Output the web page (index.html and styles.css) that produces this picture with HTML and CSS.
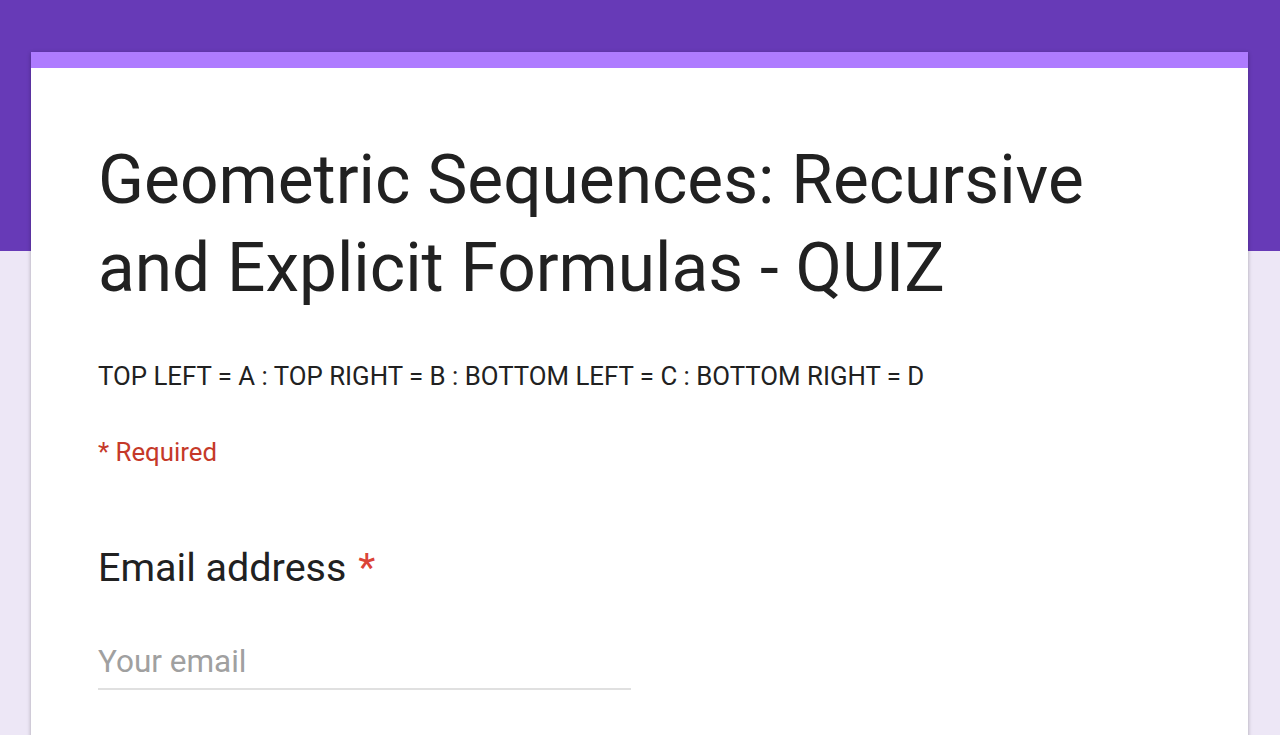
FILE: index.html
```html
<!DOCTYPE html>
<html lang="en">
<head>
    <meta charset="UTF-8">
    <meta name="viewport" content="width=device-width, initial-scale=1.0">
    <title>Geometric Sequences: Recursive and Explicit Formulas - QUIZ</title>
    <link rel="stylesheet" href="styles.css">
</head>
<body>
    <div class="header-band"></div>

    <main class="form-container">
        <div class="form-card">
            <div class="form-accent"></div>
            <div class="form-body">
                <h1 class="form-title">Geometric Sequences: Recursive and Explicit Formulas - QUIZ</h1>
                <p class="form-description">TOP LEFT = A : TOP RIGHT = B : BOTTOM LEFT = C : BOTTOM RIGHT = D</p>
                <p class="required-note">* Required</p>

                <div class="question">
                    <label class="question-title" for="email">Email address <span class="asterisk">*</span></label>
                    <input type="email" id="email" class="text-input" placeholder="Your email">
                </div>
            </div>
        </div>
    </main>
</body>
</html>
```

FILE: styles.css
```css
body {
    font-family: 'Roboto', 'Liberation Sans', sans-serif;
    margin: 0;
    padding: 0;
    background-color: #ede7f6;
    color: #212121;
}

.header-band {
    height: 251px;
    background-color: #673ab7;
}

.form-container {
    margin-top: -199px;
    padding: 0 32px 0 31px;
}

.form-card {
    background: #fff;
    box-shadow: 0 1px 4px rgba(0, 0, 0, 0.3);
    min-height: 800px;
}

.form-accent {
    height: 16px;
    background-color: #ae7bff;
}

.form-body {
    padding: 68px 67px 0;
}

.form-title {
    margin: 0;
    font-size: 67.6px;
    line-height: 88px;
    font-weight: 400;
    color: #212121;
    max-width: 1050px;
}

.form-description {
    margin: 49px 0 0;
    font-size: 25.8px;
    line-height: 30px;
    color: #212121;
}

.required-note {
    margin: 46px 0 0;
    font-size: 25.8px;
    line-height: 30px;
    color: #c53929;
}

.question {
    margin-top: 79px;
}

.question-title {
    display: block;
    font-size: 39.5px;
    line-height: 44px;
    color: #212121;
}

.asterisk {
    margin-left: 2px;
    color: #db4437;
}

.text-input {
    display: block;
    margin-top: 52px;
    width: 533px;
    height: 48px;
    box-sizing: border-box;
    border: none;
    border-bottom: 2px solid #e0e0e0;
    padding: 0 0 7px;
    font-family: 'Roboto', 'Liberation Sans', sans-serif;
    font-size: 31.5px;
    line-height: 40px;
    color: #212121;
    outline: none;
}

.text-input::placeholder {
    color: #a0a0a0;
}
```
